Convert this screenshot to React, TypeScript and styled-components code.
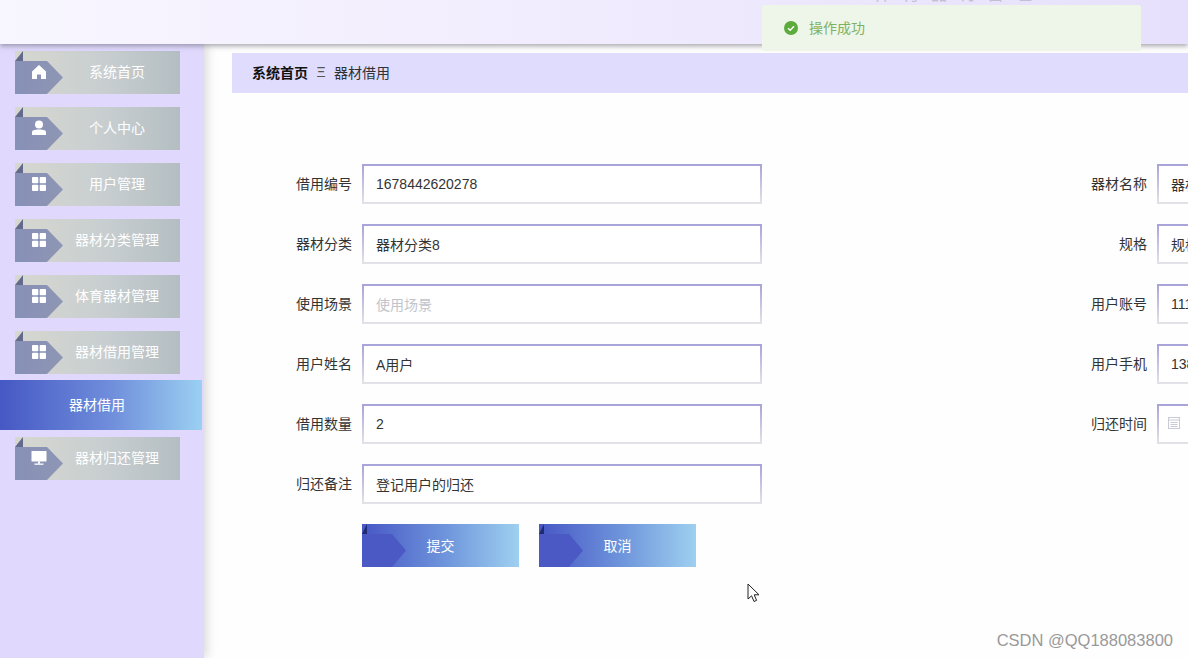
import React from 'react';
import styled, { createGlobalStyle } from 'styled-components';

const GlobalStyle = createGlobalStyle`
  html, body {
    margin: 0;
    height: 100%;
    overflow: hidden;
    background: #fff;
    font-family: 'Liberation Sans', 'Noto Sans CJK SC', sans-serif;
  }
`;

/* ── page frame ── */

const Page = styled.div`
  position: relative;
  width: 1188px;
  height: 658px;
  overflow: hidden;
  background: #fefefe;
`;

const Header = styled.header`
  position: relative;
  z-index: 2;
  height: 44px;
  overflow: hidden;
  display: flex;
  justify-content: flex-end;
  padding-right: 146px;
  background: linear-gradient(90deg, #f8f6ff 0%, #f2eefe 40%, #e6e0fc 100%);
  box-shadow: 0 2px 5px rgba(80, 80, 90, 0.5);
`;

const Title = styled.div`
  margin-top: -16px;
  font-size: 18px;
  line-height: 20px;
  letter-spacing: 10px;
  color: #c2c0d0;
`;

const Body = styled.div`
  display: flex;
  height: 614px;
`;

/* ── sidebar ── */

const Sidebar = styled.aside`
  flex: none;
  width: 204px;
  padding-top: 7px;
  background: #e0d9fd;
  box-shadow: 3px 0 9px rgba(100, 100, 110, 0.24);
`;

const NavItem = styled.div`
  position: relative;
  width: 165px;
  height: 43px;
  margin: 0 0 13px 15px;
  padding: 0 0 3px 39px;
  box-sizing: border-box;
  display: flex;
  align-items: center;
  justify-content: center;
  font-size: 14px;
  color: #fff;
  background: linear-gradient(90deg, #d6d7d0 0%, #c8ced0 55%, #b4bec2 100%);
`;

const NavFold = styled.span`
  position: absolute;
  left: 0;
  top: 0;
  width: 8px;
  height: 10px;
  background: #636a8c;
  clip-path: polygon(100% 0, 100% 100%, 0 100%);
`;

const NavArrow = styled.span`
  position: absolute;
  left: 0;
  top: 10px;
  width: 48px;
  height: 33px;
  display: flex;
  align-items: flex-start;
  padding: 3px 0 0 16px;
  box-sizing: border-box;
  color: #fff;
  background: linear-gradient(90deg, #8790b6, #8e96b4);
  clip-path: polygon(0 0, 32px 0, 100% 50%, 32px 100%, 0 100%);
`;

const SubItem = styled.div`
  width: 202px;
  height: 50px;
  margin: -7px 0 7px;
  padding: 0 8px 2px 0;
  box-sizing: border-box;
  display: flex;
  align-items: center;
  justify-content: center;
  font-size: 14px;
  color: #fff;
  background: linear-gradient(90deg, #4658c4 0%, #6f8edb 55%, #9bd0f2 100%);
`;

/* ── content ── */

const Main = styled.main`
  flex: 1;
  min-width: 0;
  padding: 9px 0 0 28px;
`;

const Breadcrumb = styled.nav`
  height: 40px;
  padding: 0 0 2px 20px;
  box-sizing: border-box;
  display: flex;
  align-items: center;
  font-size: 14px;
  color: #303133;
  background: #e0dcfd;
`;

const CrumbHome = styled.span`
  font-weight: 700;
  color: #111;
`;

const CrumbSep = styled.span`
  width: 26px;
  text-align: center;
  color: #555;
`;

const Form = styled.form`
  display: grid;
  grid-template-columns: 795px 795px;
  row-gap: 20px;
  margin-top: 71px;
`;

const Field = styled.div`
  display: flex;
  align-items: center;
  height: 40px;
`;

const Label = styled.label`
  flex: none;
  width: 130px;
  padding: 0 10px 2px 0;
  box-sizing: border-box;
  text-align: right;
  font-size: 14px;
  color: #333;
`;

const Input = styled.div<{ $placeholder?: boolean }>`
  flex: none;
  width: 400px;
  height: 40px;
  padding-left: 12px;
  box-sizing: border-box;
  display: flex;
  align-items: center;
  font-size: 14px;
  color: ${(p) => (p.$placeholder ? '#c0c4cc' : '#333')};
  background: #fff;
  border: 2px solid;
  border-image: linear-gradient(180deg, #a8a4da 0%, #e2e2e8 100%) 1;
`;

const DateIcon = styled.svg`
  margin: -2px 0 0 -4px;
`;

const Actions = styled.div`
  display: flex;
  gap: 20px;
  padding-left: 130px;
`;

const Button = styled.button`
  position: relative;
  width: 157px;
  height: 43px;
  padding: 0 0 2px;
  border: 0;
  font-family: inherit;
  font-size: 14px;
  color: #fff;
  background: linear-gradient(90deg, #4757c5 0%, #7097dc 55%, #9ed0f0 100%);
`;

const ButtonFold = styled.span`
  position: absolute;
  left: 0;
  top: 0;
  width: 5px;
  height: 10px;
  background: #1f2a70;
  clip-path: polygon(100% 0, 100% 100%, 0 100%);
`;

const ButtonArrow = styled.span`
  position: absolute;
  left: 0;
  top: 10px;
  width: 44px;
  height: 33px;
  background: #4b59c5;
  clip-path: polygon(0 0, 30px 0, 100% 50%, 30px 100%, 0 100%);
`;

/* ── overlays ── */

const Toast = styled.div`
  position: absolute;
  z-index: 3;
  left: 762px;
  top: 5px;
  width: 379px;
  height: 46px;
  padding-left: 22px;
  box-sizing: border-box;
  display: flex;
  align-items: center;
  gap: 11px;
  font-size: 14px;
  color: #7fb164;
  background: #edf6e8;
  border-radius: 2px;
`;

const ToastText = styled.span`
  margin-top: -3px;
`;

const Cursor = styled.svg`
  position: absolute;
  z-index: 3;
  left: 747px;
  top: 583px;
`;

const Watermark = styled.div`
  position: absolute;
  z-index: 3;
  right: 15px;
  top: 631px;
  font-size: 16.5px;
  color: #999;
`;

/* ── icons ── */

const HomeIcon = () => (
  <svg width="16" height="16" viewBox="0 0 16 16" fill="currentColor">
    <path d="M8 1 L15 7.5 V15 H10 V10.5 H6 V15 H1 V7.5 Z" />
  </svg>
);

const UserIcon = () => (
  <svg width="16" height="16" viewBox="0 0 16 16" fill="currentColor">
    <circle cx="8" cy="4.6" r="4" />
    <path d="M1 15 V12.5 C1 10.5 3 9.6 8 9.6 C13 9.6 15 10.5 15 12.5 V15 Z" />
  </svg>
);

const GridIcon = () => (
  <svg width="16" height="16" viewBox="0 0 16 16" fill="currentColor">
    <rect x="1" y="1" width="6.3" height="6.3" rx="1" />
    <rect x="8.7" y="1" width="6.3" height="6.3" rx="1" />
    <rect x="1" y="8.7" width="6.3" height="6.3" rx="1" />
    <rect x="8.7" y="8.7" width="6.3" height="6.3" rx="1" />
  </svg>
);

const MonitorIcon = () => (
  <svg width="16" height="16" viewBox="0 0 16 16" fill="currentColor">
    <rect x="0.5" y="1" width="15" height="10.5" rx="0.5" />
    <rect x="7" y="11.5" width="2" height="2.2" />
    <rect x="3.5" y="13.5" width="9" height="1.3" />
  </svg>
);

const CheckIcon = () => (
  <svg width="14" height="14" viewBox="0 0 14 14">
    <circle cx="7" cy="7" r="7" fill="#5dab3c" />
    <path d="M4 7.2 L6.2 9.3 L10 5.2" fill="none" stroke="#fff" strokeWidth="1.4" />
  </svg>
);

const CalendarIcon = () => (
  <DateIcon width="14" height="14" viewBox="0 0 14 14" fill="none" stroke="#c8cad6" strokeWidth="1">
    <rect x="1.5" y="1.5" width="11" height="11" />
    <path d="M1.5 4 H12.5 M3.5 6.5 H10.5 M3.5 8.5 H10.5 M3.5 10.5 H10.5" />
  </DateIcon>
);

/* ── data ── */

const navTop = [
  { label: '系统首页', icon: <HomeIcon /> },
  { label: '个人中心', icon: <UserIcon /> },
  { label: '用户管理', icon: <GridIcon /> },
  { label: '器材分类管理', icon: <GridIcon /> },
  { label: '体育器材管理', icon: <GridIcon /> },
  { label: '器材借用管理', icon: <GridIcon /> },
];

const rows = [
  ['借用编号', '1678442620278', '器材名称', '器材'],
  ['器材分类', '器材分类8', '规格', '规格'],
  ['使用场景', '', '用户账号', '111'],
  ['用户姓名', 'A用户', '用户手机', '138'],
  ['借用数量', '2', '归还时间', ''],
];

const NavEntry = ({ label, icon }: { label: string; icon: React.ReactNode }) => (
  <NavItem>
    <NavFold />
    <NavArrow>{icon}</NavArrow>
    {label}
  </NavItem>
);

const FormButton = ({ children }: { children: React.ReactNode }) => (
  <Button type="button">
    <ButtonFold />
    <ButtonArrow />
    {children}
  </Button>
);

export default function App() {
  return (
    <Page>
      <GlobalStyle />
      <Header>
        <Title>体育器材管理</Title>
      </Header>
      <Body>
        <Sidebar>
          {navTop.map((n) => (
            <NavEntry key={n.label} label={n.label} icon={n.icon} />
          ))}
          <SubItem>器材借用</SubItem>
          <NavEntry label="器材归还管理" icon={<MonitorIcon />} />
        </Sidebar>
        <Main>
          <Breadcrumb>
            <CrumbHome>系统首页</CrumbHome>
            <CrumbSep>Ξ</CrumbSep>
            <span>器材借用</span>
          </Breadcrumb>
          <Form>
            {rows.map(([l1, v1, l2, v2]) => (
              <React.Fragment key={l1}>
                <Field>
                  <Label>{l1}</Label>
                  <Input $placeholder={!v1}>{v1 || l1}</Input>
                </Field>
                <Field>
                  <Label>{l2}</Label>
                  <Input>{v2 || <CalendarIcon />}</Input>
                </Field>
              </React.Fragment>
            ))}
            <Field>
              <Label>归还备注</Label>
              <Input>登记用户的归还</Input>
            </Field>
            <div />
            <Actions>
              <FormButton>提交</FormButton>
              <FormButton>取消</FormButton>
            </Actions>
          </Form>
        </Main>
      </Body>
      <Toast>
        <CheckIcon />
        <ToastText>操作成功</ToastText>
      </Toast>
      <Cursor width="14" height="20" viewBox="0 0 14 20">
        <path d="M1 1 V16 L4.6 12.8 L7 18.5 L9.6 17.4 L7.2 11.8 H12 Z" fill="#fff" stroke="#222" strokeWidth="1" />
      </Cursor>
      <Watermark>CSDN @QQ188083800</Watermark>
    </Page>
  );
}
